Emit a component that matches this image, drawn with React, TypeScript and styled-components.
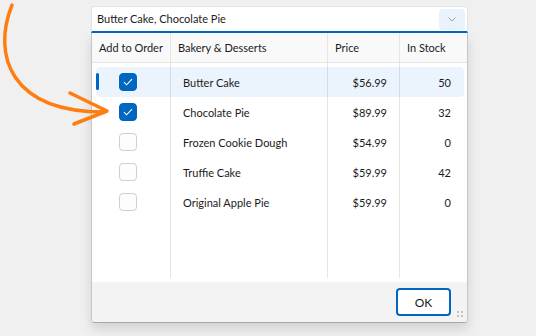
import React from 'react';
import styled, { createGlobalStyle } from 'styled-components';

type Item = {
	name: string
	price: string
	stock: number
	checked: boolean
}

const items: Item[] = [
	{ name: 'Butter Cake', price: '$56.99', stock: 50, checked: true },
	{ name: 'Chocolate Pie', price: '$89.99', stock: 32, checked: true },
	{ name: 'Frozen Cookie Dough', price: '$54.99', stock: 0, checked: false },
	{ name: 'Truffie Cake', price: '$59.99', stock: 42, checked: false },
	{ name: 'Original Apple Pie', price: '$59.99', stock: 0, checked: false },
];

const GlobalStyle = createGlobalStyle`
	body {
		margin: 0;
		background: #f0f0f0;
		font-family: Lato, "Noto Sans", sans-serif;
		font-size: 11px;
		color: #1b1b1b;
	}
`;

const App = () => {
	return (
		<>
			<GlobalStyle />
			<Page>
				<Arrow />
				<Picker>
					<Combo>
						<ComboText>Butter Cake, Chocolate Pie</ComboText>
						<DropButton>
							<svg width="8" height="5" viewBox="0 0 8 5">
								<path d="M0.5 0.5 L4 4 L7.5 0.5" fill="none" stroke="#a0a0a0" strokeWidth="1" />
							</svg>
						</DropButton>
					</Combo>

					<Popup>
						<Header>
							<HeadCell>Add to Order</HeadCell>
							<HeadCell>Bakery &amp; Desserts</HeadCell>
							<HeadCell>Price</HeadCell>
							<HeadCell last>In Stock</HeadCell>
						</Header>

						<Body>
							{items.map((item, i) => (
								<Row key={item.name} selected={i === 0}>
									<CheckCell>
										<Check checked={item.checked}>
											{item.checked &&
												<svg width="10" height="8" viewBox="0 0 10 8">
													<path d="M1 4.2 L3.6 6.8 L9 1.2" fill="none" stroke="white" strokeWidth="1.1" />
												</svg>
											}
										</Check>
									</CheckCell>
									<TextCell>{item.name}</TextCell>
									<NumCell>{item.price}</NumCell>
									<NumCell>{item.stock}</NumCell>
								</Row>
							))}
						</Body>

						<Footer>
							<OkButton>OK</OkButton>
							<Grip>
								<svg width="8" height="8" viewBox="0 0 8 8">
									<rect x="0" y="0" width="2" height="2" fill="#c2c2c2" />
									<rect x="4" y="0" width="2" height="2" fill="#c2c2c2" />
									<rect x="0" y="4" width="2" height="2" fill="#c2c2c2" />
									<rect x="4" y="4" width="2" height="2" fill="#c2c2c2" />
								</svg>
							</Grip>
						</Footer>
					</Popup>
				</Picker>
			</Page>
		</>
	)
}

// hand drawn annotation arrow pointing at the second row
const Arrow = () => (
	<ArrowSvg width="120" height="130" viewBox="0 0 120 130">
		<path d="M12 5 C -8 55, 10 112, 104 112" fill="none" stroke="#ff7d0f" strokeWidth="3.5" strokeLinecap="round" />
		<path d="M70 93 L107 111 L74 124" fill="none" stroke="#ff7d0f" strokeWidth="3.5" strokeLinecap="round" strokeLinejoin="round" />
	</ArrowSvg>
);

const Page = styled.div`
	position: relative;
	width: 536px;
	height: 336px;
	padding: 6px 0 0 91px;
	box-sizing: border-box;
`;

const ArrowSvg = styled.svg`
	position: absolute;
	left: 0;
	top: 0;
	z-index: 2;
`;

const Picker = styled.div`
	width: 377px;
	display: flex;
	flex-direction: column;
`;

const Combo = styled.div`
	height: 27px;
	box-sizing: border-box;
	background: white;
	border: 1px solid #e3e3e3;
	border-bottom: 2px solid #0067c0;
	border-radius: 4px 4px 0 0;
	display: flex;
	align-items: center;
	padding: 0 2px 0 5px;
`;

const ComboText = styled.div`
	flex: 1;
	padding-bottom: 1px;
`;

const DropButton = styled.div`
	width: 26px;
	height: 21px;
	border-radius: 4px;
	background: #eaf3fc;
	display: flex;
	align-items: center;
	justify-content: center;
`;

const Popup = styled.div`
	position: relative;
	height: 289px;
	display: flex;
	flex-direction: column;
	background: white;
	border: 1px solid #c6c6c6;
	border-top: none;
	border-bottom-color: #a9a9a9;
	border-radius: 0 0 4px 4px;
	box-shadow: 0 6px 12px rgba(0, 0, 0, 0.13);
	overflow: hidden;
`;

const Header = styled.div`
	height: 29px;
	display: grid;
	grid-template-columns: 79px 157px 72px 1fr;
	background: #f9f9f9;
	border-bottom: 1px solid #e5e5e5;
`;

const HeadCell = styled.div<{ last?: boolean }>`
	display: flex;
	align-items: center;
	padding-left: 7px;
	border-right: ${({ last }) => (last ? 'none' : '1px solid #e5e5e5')};
`;

const Body = styled.div`
	flex: 1;
	padding: 4px 3px 4px 4px;
	background-image:
		linear-gradient(#e5e5e5, #e5e5e5),
		linear-gradient(#e5e5e5, #e5e5e5),
		linear-gradient(#e5e5e5, #e5e5e5);
	background-size: 1px calc(100% - 4px);
	background-position: 78px 0, 235px 0, 307px 0;
	background-repeat: no-repeat;
`;

const Row = styled.div<{ selected?: boolean }>`
	position: relative;
	height: 30px;
	display: grid;
	grid-template-columns: 75px 157px 72px 1fr;
	border-radius: 4px;
	background: ${({ selected }) => (selected ? 'rgba(0, 120, 212, 0.08)' : 'transparent')};

	&::before {
		content: '';
		display: ${({ selected }) => (selected ? 'block' : 'none')};
		position: absolute;
		left: 0;
		top: 6px;
		width: 3px;
		height: 17px;
		border-radius: 2px;
		background: #0067c0;
	}
`;

const CheckCell = styled.div`
	display: flex;
	align-items: center;
	padding-left: 23px;
`;

const Check = styled.div<{ checked?: boolean }>`
	width: 18px;
	height: 18px;
	box-sizing: border-box;
	border-radius: 4px;
	display: flex;
	align-items: center;
	justify-content: center;
	background: ${({ checked }) => (checked ? '#0067c0' : '#fdfdfd')};
	border: 1px solid ${({ checked }) => (checked ? '#0067c0' : '#cfcfcf')};
`;

const TextCell = styled.div`
	display: flex;
	align-items: center;
	padding-left: 12px;
`;

const NumCell = styled.div`
	display: flex;
	align-items: center;
	justify-content: flex-end;
	padding-right: 13px;
`;

const Footer = styled.div`
	height: 40px;
	display: flex;
	align-items: center;
	justify-content: flex-end;
	padding-right: 16px;
	background: #f3f3f3;
`;

const OkButton = styled.button`
	width: 55px;
	height: 28px;
	box-sizing: border-box;
	border: 2px solid #0067c0;
	border-radius: 4px;
	background: white;
	font-family: Lato, "Noto Sans", sans-serif;
	font-size: 12px;
	color: #1b1b1b;
	padding: 0;
`;

const Grip = styled.div`
	position: absolute;
	right: 2px;
	bottom: 3px;
	width: 8px;
	height: 8px;
	display: flex;
`;

export default App;
